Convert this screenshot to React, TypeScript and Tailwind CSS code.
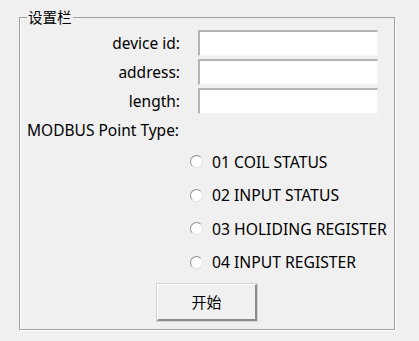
import React from "react";

const font = { fontFamily: '"Noto Sans", "Noto Sans CJK SC", sans-serif' };

function Radio({ label }: { label: string }) {
  return (
    <div className="flex h-[33.5px] items-center">
      <span className="box-border h-[13px] w-[13px] rounded-full border-[1.5px] border-t-[#8f8f8f] border-l-[#8f8f8f] border-b-[#e0e0e0] border-r-[#e0e0e0] bg-white" />
      <span className="ml-[9px] text-[15.7px] leading-[20px] text-black">{label}</span>
    </div>
  );
}

function Field({ label }: { label: string }) {
  return (
    <>
      <div className="flex h-[26px] items-center justify-end text-[15.5px] leading-[20px] text-black">{label}</div>
      <div className="box-border h-[26px] w-[180px] border-t-2 border-l-2 border-b border-r border-t-[#b4b4b4] border-l-[#b4b4b4] border-b-[#f4f4f4] border-r-[#f4f4f4] bg-white" />
    </>
  );
}

export default function App() {
  return (
    <div className="h-[341px] w-[419px] bg-[#f0f0f0] pt-[8px] pl-[19px]" style={font}>
      <fieldset className="box-border h-[322px] w-[376px] border border-[#a0a0a0] shadow-[1px_1px_0_#ffffff,inset_1px_0_0_#ffffff]">
        <legend className="ml-[7px] px-[1px] text-[14.5px] leading-[18px] text-black">设置栏</legend>
        <div className="mt-[4px] grid grid-cols-[160px_180px] gap-x-[18px] gap-y-[3px]">
          <Field label="device id:" />
          <Field label="address:" />
          <Field label="length:" />
        </div>
        <div className="mt-[6px] pl-[7px] text-[15.5px] leading-[20px] text-black">MODBUS Point Type:</div>
        <div className="mt-[5px] flex flex-col pl-[170px]">
          <Radio label="01 COIL STATUS" />
          <Radio label="02 INPUT STATUS" />
          <Radio label="03 HOLIDING REGISTER" />
          <Radio label="04 INPUT REGISTER" />
        </div>
        <div className="mt-[5px] pl-[137px]">
          <button className="box-border flex h-[37px] w-[100px] items-center justify-center border-t border-l border-b-2 border-r-2 border-t-[#ffffff] border-l-[#ffffff] border-b-[#8c8c8c] border-r-[#8c8c8c] bg-[#f0f0f0] text-[15px] leading-[18px] text-black shadow-[0_0_0_1px_#d4d4d4]">
            开始
          </button>
        </div>
      </fieldset>
    </div>
  );
}
